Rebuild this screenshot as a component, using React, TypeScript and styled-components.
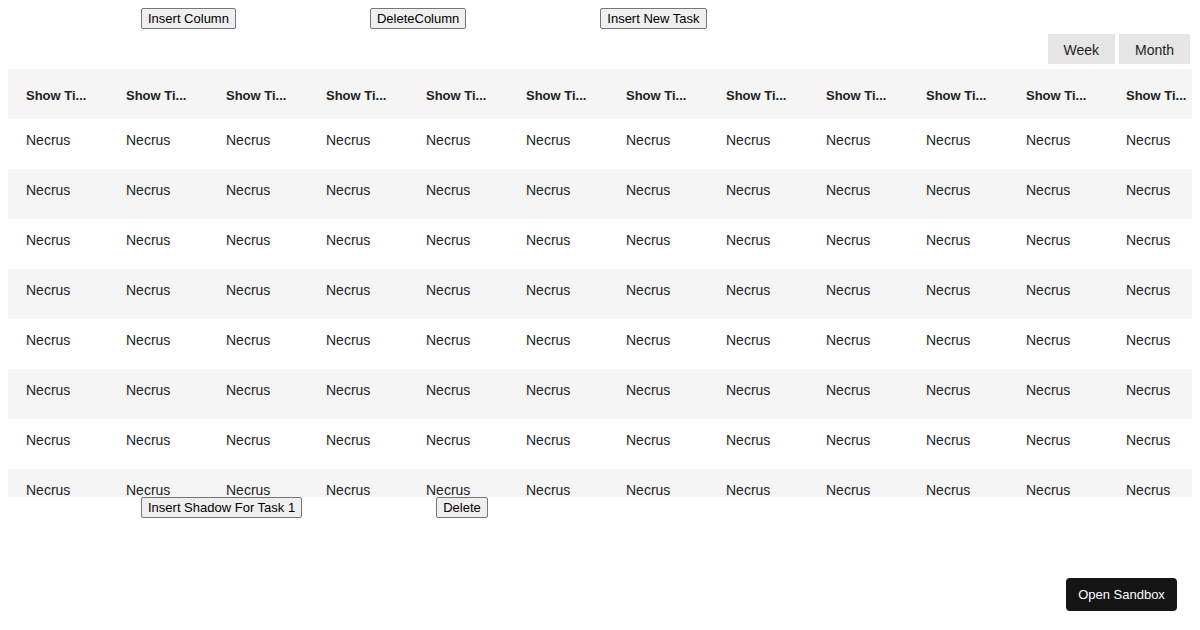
import styled, { createGlobalStyle } from "styled-components";

const GlobalStyle = createGlobalStyle`
  body {
    margin: 8px;
    font-family: "Liberation Sans", Arial, sans-serif;
    background: #fff;
  }
`;

const COLUMNS = 12;
const ROWS = 8;

const ButtonBar = styled.div`
  display: flex;
  height: 21px;
`;

const PlainButton = styled.button`
  margin-left: 134px;
  height: 21px;
  padding: 1px 6px;
  font-family: "Liberation Sans", Arial, sans-serif;
  font-size: 13px;
  color: #000;
  background: #efefef;
  border: 1px solid #767676;
  border-radius: 2px;
  cursor: pointer;
  white-space: nowrap;

  &:first-child {
    margin-left: 133px;
  }
`;

const ViewSwitch = styled.div`
  display: flex;
  justify-content: flex-end;
  gap: 4px;
  margin-top: 5px;
  padding-right: 2px;
`;

const ViewButton = styled.button`
  height: 30px;
  padding: 1px 16px 0;
  border: none;
  background: #e5e5e5;
  font-family: "Liberation Sans", Arial, sans-serif;
  font-size: 14px;
  color: #222;
  cursor: pointer;
`;

const TableWrap = styled.div`
  margin-top: 5px;
  height: 428px;
  overflow: hidden;
`;

const Row = styled.div<{ $shaded?: boolean }>`
  display: flex;
  height: 50px;
  background: ${(p) => (p.$shaded ? "#f5f5f5" : "#fff")};
`;

const Cell = styled.div<{ $head?: boolean }>`
  flex: 0 0 100px;
  display: flex;
  align-items: center;
  padding: ${(p) => (p.$head ? "2px 0 0 18px" : "0 0 9px 18px")};
  box-sizing: border-box;
  font-size: ${(p) => (p.$head ? "13px" : "14px")};
  font-weight: ${(p) => (p.$head ? 700 : 400)};
  color: #222;
  white-space: nowrap;
`;

const SandboxButton = styled.button`
  position: fixed;
  right: 23px;
  bottom: 19px;
  width: 111px;
  height: 33px;
  border: none;
  border-radius: 4px;
  background: #151515;
  color: #fff;
  font-family: "Liberation Sans", Arial, sans-serif;
  font-size: 13px;
  cursor: pointer;
`;

const cols = Array.from({ length: COLUMNS }, (_, i) => i);
const rows = Array.from({ length: ROWS }, (_, i) => i);

export default function App() {
  return (
    <>
      <GlobalStyle />
      <ButtonBar>
        <PlainButton>Insert Column</PlainButton>
        <PlainButton>DeleteColumn</PlainButton>
        <PlainButton>Insert New Task</PlainButton>
      </ButtonBar>
      <ViewSwitch>
        <ViewButton>Week</ViewButton>
        <ViewButton>Month</ViewButton>
      </ViewSwitch>
      <TableWrap>
        <Row $shaded>
          {cols.map((c) => (
            <Cell key={c} $head>
              Show Ti...
            </Cell>
          ))}
        </Row>
        {rows.map((r) => (
          <Row key={r} $shaded={r % 2 === 1}>
            {cols.map((c) => (
              <Cell key={c}>Necrus</Cell>
            ))}
          </Row>
        ))}
      </TableWrap>
      <ButtonBar>
        <PlainButton>Insert Shadow For Task 1</PlainButton>
        <PlainButton>Delete</PlainButton>
      </ButtonBar>
      <SandboxButton>Open Sandbox</SandboxButton>
    </>
  );
}
